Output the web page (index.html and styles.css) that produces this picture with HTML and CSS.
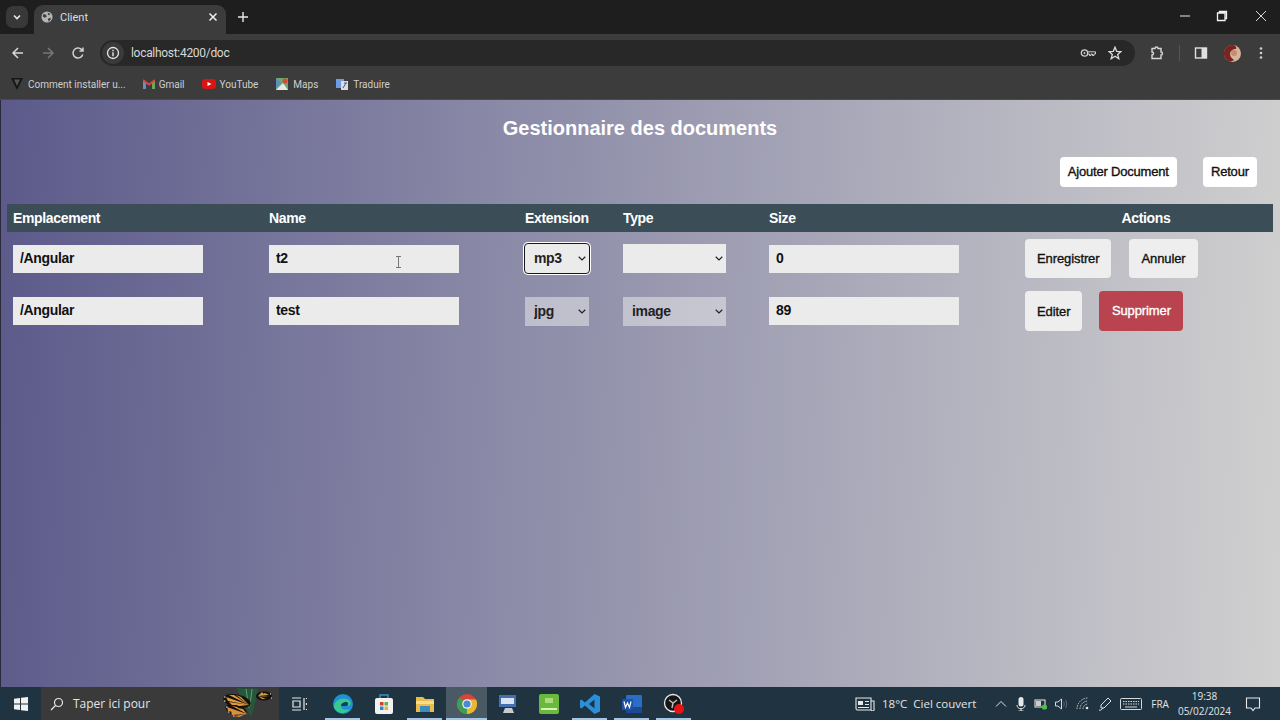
FILE: index.html
```html
<!DOCTYPE html>
<html lang="fr">
<head>
    <meta charset="UTF-8">
    <meta name="viewport" content="width=device-width, initial-scale=1.0">
    <title>Client</title>
    <link rel="stylesheet" href="styles.css">
</head>
<body>
    <div class="browser">
        <!-- Onglets -->
        <div class="tab-strip">
            <div class="tab-search">
                <svg class="ic-10" viewBox="0 0 10 10"><path d="M2 3.500 5 6.500 8 3.500" fill="none" stroke="#e8e8e8" stroke-width="1.600"/></svg>
            </div>
            <div class="tab">
                <svg class="ic-12" viewBox="0 0 14 14"><circle cx="7" cy="7" r="6.500" fill="#b5b5b5"/><path d="M3 3.500 6 4.500 6.500 7 4 8 2 6ZM8 9l3-1 .5 1.500L9 12.500Z M8 2l3 1.500-1.500 1.500L8 4Z" fill="#3c3c3c"/></svg>
                <span class="tab-title">Client</span>
                <svg class="ic-10" viewBox="0 0 10 10"><path d="M1.500 1.500 8.500 8.500M8.500 1.500 1.500 8.500" stroke="#f0f0f0" stroke-width="1.500"/></svg>
            </div>
            <svg class="new-tab ic-12" viewBox="0 0 12 12"><path d="M6 1v10M1 6h10" stroke="#e8e8e8" stroke-width="1.400"/></svg>
            <div class="window-btns">
                <svg class="ic-12 win-min" viewBox="0 0 12 12"><path d="M1 6h10" stroke="#e8e8e8"/></svg>
                <svg class="ic-12" viewBox="0 0 12 12"><path d="M1.500 3h7.500v7.500H1.500ZM3.500 3V1.500h7v7H9" fill="none" stroke="#f4f4f4" stroke-width="1.300"/></svg>
                <svg class="ic-12" viewBox="0 0 12 12"><path d="M1 1l10 10M11 1 1 11" stroke="#d8d8d8"/></svg>
            </div>
        </div>

        <!-- Barre d'adresse -->
        <div class="toolbar">
            <svg class="ic-14" viewBox="0 0 14 14"><path d="M12 7H2.500M7 2 2 7l5 5" fill="none" stroke="#d8d8d8" stroke-width="1.500"/></svg>
            <svg class="ic-14" viewBox="0 0 14 14"><path d="M2 7h9.500M7 2l5 5-5 5" fill="none" stroke="#777" stroke-width="1.500"/></svg>
            <svg class="ic-14" viewBox="0 0 14 14"><path d="M11.800 8.500A5 5 0 1 1 10.500 3.400L12 5M12 1.500V5H8.500" fill="none" stroke="#d0d0d0" stroke-width="1.500"/></svg>
            <div class="omnibox">
                <div class="site-info">
                    <svg class="ic-14" viewBox="0 0 14 14"><circle cx="7" cy="7" r="5.500" fill="none" stroke="#e8e8e8" stroke-width="1.300"/><path d="M7 6.200v4M7 3.800v1.400" stroke="#e8e8e8" stroke-width="1.400"/></svg>
                </div>
                <span class="url">localhost:4200/doc</span>
                <svg class="ic-16" viewBox="0 0 16 16"><circle cx="4.500" cy="8" r="3.200" fill="none" stroke="#d0d0d0" stroke-width="1.300"/><circle cx="4.500" cy="8" r="1" fill="#d0d0d0"/><path d="M7.700 6.800H15.500V9H14V10.500H12.500V9H11V10.500H9.500V9H7.700" fill="none" stroke="#d0d0d0"/></svg>
                <svg class="ic-14" viewBox="0 0 14 14"><path d="M7 1.200 8.700 5.300 13 5.600 9.700 8.400 10.800 12.700 7 10.300 3.200 12.700 4.300 8.400 1 5.600 5.300 5.300Z" fill="none" stroke="#dcdcdc" stroke-width="1.300"/></svg>
            </div>
            <svg class="ic-16 puzzle" viewBox="0 0 16 16"><path d="M3 3.500H6A1.500 1.500 0 0 1 9 3.500H12V7A1.500 1.500 0 0 1 12 10V13.500H3V10A1.500 1.500 0 0 0 3 7Z" fill="none" stroke="#d8d8d8" stroke-width="1.400"/></svg>
            <div class="divider"></div>
            <svg class="ic-14" viewBox="0 0 14 14"><rect x="1.500" y="2" width="11" height="10" fill="none" stroke="#e0e0e0" stroke-width="1.400"/><rect x="7.500" y="2" width="5" height="10" fill="#e0e0e0"/></svg>
            <svg class="avatar" viewBox="0 0 17 17"><circle cx="8.500" cy="8.500" r="8.500" fill="#d8b49c"/><path d="M8.500 0A8.500 8.500 0 0 0 2 14c2 3 6 3 8 1-2-2-4-3-4-6 0-3 3-5 6-5 1-2-1-4-3.500-4Z" fill="#7a2420"/><circle cx="10" cy="8" r="3" fill="#c48c74"/></svg>
            <svg class="ic-14" viewBox="0 0 14 14"><circle cx="7" cy="2.500" r="1.300" fill="#cfcfcf"/><circle cx="7" cy="7" r="1.300" fill="#cfcfcf"/><circle cx="7" cy="11.500" r="1.300" fill="#cfcfcf"/></svg>
        </div>

        <!-- Favoris -->
        <div class="bookmarks">
            <a class="bookmark">
                <svg class="ic-14" viewBox="0 0 14 14"><path d="M1 1h12L7 13Z" fill="#151515"/><path d="M4 2.500h6L7 9Z" fill="#555"/></svg>
                Comment installer u...
            </a>
            <a class="bookmark">
                <svg class="ic-12" viewBox="0 0 12 10"><path d="M0 1 3 3V10H0Z" fill="#6d8dc4"/><path d="M12 1 9 3V10H12Z" fill="#6aa85f"/><path d="M0 1 6 5.500 12 1" fill="none" stroke="#d8483a" stroke-width="2"/></svg>
                Gmail
            </a>
            <a class="bookmark">
                <svg class="ic-14" viewBox="0 0 14 10"><rect width="14" height="10" rx="3" fill="#d81414"/><path d="M5.500 3 9.500 5 5.500 7Z" fill="#fff"/></svg>
                YouTube
            </a>
            <a class="bookmark">
                <svg class="ic-14" viewBox="0 0 14 14"><rect x="1" y="1" width="12" height="12" fill="#6fa868"/><path d="M1 13 8 6l5 7Z" fill="#e8e8e8"/><path d="M1 1 6 6 1 11Z" fill="#5a8dd0"/><circle cx="10" cy="4" r="2.500" fill="#d8483a"/></svg>
                Maps
            </a>
            <a class="bookmark">
                <svg class="ic-14" viewBox="0 0 14 14"><rect x="1" y="2" width="8" height="9" fill="#6d9ce0"/><rect x="6" y="4" width="7" height="9" fill="#d8dce6"/><path d="M8 11 11 6M9 6h3" stroke="#556" fill="none"/></svg>
                Traduire
            </a>
        </div>
    </div>

    <main class="page">
        <h1>Gestionnaire des documents</h1>

        <div class="top-actions">
            <button class="btn btn-white">Ajouter Document</button>
            <button class="btn btn-white">Retour</button>
        </div>

        <table class="doc-table">
            <thead>
                <tr>
                    <th class="col-path">Emplacement</th>
                    <th class="col-name">Name</th>
                    <th class="col-ext">Extension</th>
                    <th class="col-type">Type</th>
                    <th class="col-size">Size</th>
                    <th class="col-actions">Actions</th>
                </tr>
            </thead>
            <tbody>
                <tr>
                    <td><input class="field" type="text" value="/Angular"></td>
                    <td class="name-cell">
                        <input class="field" type="text" value="t2">
                        <svg class="text-cursor" viewBox="0 0 7 12"><path d="M1 .5h5M1 11.500h5M3.500 .5v11" fill="none" stroke="#777"/></svg>
                    </td>
                    <td>
                        <select class="pick pick-ext pick-focus"><option>mp3</option></select>
                    </td>
                    <td>
                        <select class="pick pick-type"><option></option></select>
                    </td>
                    <td><input class="field" type="text" value="0"></td>
                    <td>
                        <div class="row-actions">
                            <button class="btn btn-grey">Enregistrer</button>
                            <button class="btn btn-grey">Annuler</button>
                        </div>
                    </td>
                </tr>
                <tr>
                    <td><input class="field" type="text" value="/Angular"></td>
                    <td><input class="field" type="text" value="test"></td>
                    <td>
                        <select class="pick pick-ext pick-off" disabled><option>jpg</option></select>
                    </td>
                    <td>
                        <select class="pick pick-type pick-off" disabled><option>image</option></select>
                    </td>
                    <td><input class="field" type="text" value="89"></td>
                    <td>
                        <div class="row-actions">
                            <button class="btn btn-grey">Editer</button>
                            <button class="btn btn-red">Supprimer</button>
                        </div>
                    </td>
                </tr>
            </tbody>
        </table>
    </main>

    <footer class="taskbar">
        <div class="start">
            <svg class="ic-16" viewBox="0 0 16 16"><path d="M1 2.800 7 2V7.500H1ZM8 1.800 15 1V7.500H8ZM1 8.500H7V14L1 13.200ZM8 8.500H15V15L8 14.200Z" fill="#f2f2f2"/></svg>
        </div>
        <div class="task-search">
            <svg class="ic-14" viewBox="0 0 14 14"><circle cx="8.500" cy="5.500" r="4" fill="none" stroke="#e8e8e8" stroke-width="1.200"/><path d="M5.500 8.500 1 13" stroke="#e8e8e8" stroke-width="1.200"/></svg>
            <span class="search-text">Taper ici pour</span>
            <svg class="butterfly" viewBox="0 0 50 32">
                <path d="M14 2C20 3 30 2 35 3 34 12 31 22 28 31L24 24C20 16 16 9 14 2Z" fill="#25573a"/>
                <path d="M23 3 26 22M29 3 27 20" stroke="#5fa070" fill="none"/>
                <ellipse cx="14" cy="15" rx="14" ry="6.500" transform="rotate(12 14 15)" fill="#16100a"/>
                <ellipse cx="13" cy="24" rx="11" ry="5.500" transform="rotate(18 13 24)" fill="#16100a"/>
                <path d="M26 19 3 11 5 15ZM26 19 6 9 11 9ZM26 19 13 9 18 11ZM26 19 6 16 9 19ZM26 19 11 18 16 20Z" fill="#dd9a45"/>
                <path d="M24 28 4 21 5 25ZM24 28 8 25 9 29ZM24 28 11 30 16 31ZM24 28 9 20 14 21ZM24 28 15 22 20 23Z" fill="#d98f3e"/>
                <ellipse cx="41" cy="10" rx="8" ry="4.500" fill="#16100a"/>
                <path d="M35 10 39 6 41 9ZM35 10 42 7 46 9ZM35 10 41 11 46 11ZM35 10 39 13 43 13Z" fill="#d0a050"/>
                <path d="M1 11h1.500M1 15h1.500M3 21h1.500M5 26h1.500M10 30h1.500M47 8h1M48 12h1" stroke="#f6f2e2" stroke-width="1.200"/>
            </svg>
        </div>
        <div class="task-apps">
            <div class="app app-wide">
                <svg class="ic-16" viewBox="0 0 16 16"><path d="M1 2h9M1 14h9M2 5h7v6H2ZM13 2v12M15.500 2v1M15.500 7v2M15.500 13v1" fill="none" stroke="#e8e8e8" stroke-width="1.200"/></svg>
            </div>
            <div class="app app-open">
                <svg class="ic-22" viewBox="0 0 22 22"><circle cx="11" cy="11" r="10" fill="#1f8fd8"/><path d="M2 13C3 6 13 3 18 8c2 3 0 5-3 5H9c0 3 4 5 9 3-3 4-8 5-12 3-3-2-4-4-4-6Z" fill="#38c98f"/><path d="M9 13c0-3 3-4 5-4 2 0 3 2 1 4Z" fill="#153c66"/></svg>
            </div>
            <div class="app">
                <svg class="ic-22" viewBox="0 0 22 22"><rect x="2" y="5" width="18" height="16" rx="2" fill="#f2f2f2"/><path d="M7 5V2h8v3" fill="none" stroke="#3c8ec0" stroke-width="1.500"/><rect x="7" y="9" width="3.500" height="3.500" fill="#d8402c"/><rect x="11.500" y="9" width="3.500" height="3.500" fill="#6ab04a"/><rect x="7" y="13.500" width="3.500" height="3.500" fill="#2f86d0"/><rect x="11.500" y="13.500" width="3.500" height="3.500" fill="#e8b430"/></svg>
            </div>
            <div class="app app-open">
                <svg class="ic-22" viewBox="0 0 22 22"><path d="M2 4h7l2 2h9v13H2Z" fill="#e8bd4e"/><rect x="2" y="8" width="18" height="3" fill="#f6dc8c"/><rect x="6" y="13" width="10" height="6" fill="#3d8cc0"/></svg>
            </div>
            <div class="app app-active">
                <svg class="ic-22" viewBox="0 0 22 22"><circle cx="11" cy="11" r="10" fill="#d8443a"/><path d="M11 11 2.300 16A10 10 0 0 0 11 21Z" fill="#3f9e52"/><path d="M11 11V21A10 10 0 0 0 20 6.500H11Z" fill="#e8b92e"/><path d="M11 11 2.300 16A10 10 0 0 1 3.500 4.500Z" fill="#3f9e52"/><circle cx="11" cy="11" r="4.800" fill="#f2f2f2"/><circle cx="11" cy="11" r="3.600" fill="#4a88d8"/></svg>
            </div>
            <div class="app">
                <svg class="ic-22" viewBox="0 0 22 22"><rect x="2" y="2" width="17" height="12" fill="#4270b0"/><rect x="4" y="5" width="13" height="6" fill="#d8e4f0"/><path d="M8 15h7l2 5H6Z" fill="#c8ccd0"/></svg>
            </div>
            <div class="app">
                <svg class="ic-22" viewBox="0 0 22 22"><rect x="1" y="1" width="20" height="20" rx="2" fill="#6ab83c"/><rect x="7" y="5" width="8" height="5" fill="#a8dc7c"/><rect x="3" y="15" width="16" height="2" fill="#d8f0c0"/></svg>
            </div>
            <div class="app app-open">
                <svg class="ic-22" viewBox="0 0 22 22"><path d="M15.500 1 21 3.500V18.500L15.500 21 6 12.500 2.500 15.500 1 14.500V7.500L2.500 6.500 6 9.500ZM15.500 6.500 10 11l5.500 4.500Z" fill="#2a8fd6"/></svg>
            </div>
            <div class="app app-open app-gap">
                <svg class="ic-22" viewBox="0 0 22 22"><rect x="5" y="2" width="16" height="18" rx="1" fill="#2b6cc4"/><rect x="5" y="14" width="16" height="6" fill="#1a4a94"/><rect x="1" y="6" width="11" height="11" rx="1" fill="#1d52a8"/><path d="M3 8.500 4.500 14.500 6.500 10 8.500 14.500 10 8.500" fill="none" stroke="#fff" stroke-width="1.200"/></svg>
            </div>
            <div class="app app-open app-gap">
                <svg class="ic-22" viewBox="0 0 22 22"><circle cx="10" cy="10" r="8.500" fill="#151515" stroke="#e8e8e8" stroke-width="1.300"/><path d="M6 7l4 3 4-3M10 10l-1 5" fill="none" stroke="#bbb" stroke-width="1.500"/><circle cx="16" cy="16" r="5" fill="#e81414"/></svg>
            </div>
        </div>
        <div class="tray">
            <div class="weather">
                <svg class="news" viewBox="0 0 20 14"><path d="M1 1h15v12H2.500A1.500 1.500 0 0 1 1 11.500ZM16 4h3v7.500A1.500 1.500 0 0 1 16 13" fill="none" stroke="#e8e8e8" stroke-width="1.100"/><rect x="3" y="4" width="5" height="4" fill="#e8e8e8"/><path d="M10 4.500h4M10 7.500h4M3 10.500h11" stroke="#e8e8e8"/></svg>
                <span>18°C&nbsp; Ciel couvert</span>
            </div>
            <div class="tray-icons">
                <svg class="ic-12 tray-up" viewBox="0 0 12 12"><path d="M1 8.500 6 3.500 11 8.500" fill="none" stroke="#e0e0e0"/></svg>
                <svg class="ic-14 tray-tight" viewBox="0 0 14 14"><rect x="4.500" y="0" width="5" height="9.500" rx="2.500" fill="#e8e8e8"/><path d="M3 8c0 5 8 5 8 0M7 11.500V14M4.500 14h5" fill="none" stroke="#e8e8e8"/></svg>
                <svg class="ic-14 tray-tight" viewBox="0 0 14 14"><rect x="1" y="3" width="10" height="7" fill="none" stroke="#ddd" stroke-width="1.100"/><rect x="2" y="4" width="5" height="5" fill="#ccc"/><circle cx="10.500" cy="10" r="2.600" fill="#4cc24a"/></svg>
                <svg class="ic-14" viewBox="0 0 14 14"><path d="M1.500 5H4L7.500 2V12L4 9H1.500Z" fill="none" stroke="#d8d8d8"/><path d="M9.500 4.500c1 1.500 1 3.500 0 5M11.500 3c1.700 2.500 1.700 5.500 0 8" fill="none" stroke="#667"/></svg>
                <svg class="ic-14" viewBox="0 0 14 14"><path d="M1 12A11 11 0 0 1 12 1M4 12A8 8 0 0 1 12 4M7 12A5 5 0 0 1 12 7" fill="none" stroke="#cfcfcf" stroke-dasharray="1.500 1"/><circle cx="11" cy="11" r="1.300" fill="#e8e8e8"/></svg>
                <svg class="ic-14" viewBox="0 0 14 14"><path d="M10 1l3 3-7 7H3V8Z" fill="none" stroke="#e0e0e0"/><path d="M1 13c2 1 3-1 4-2" fill="none" stroke="#e0e0e0"/></svg>
                <svg class="keyboard" viewBox="0 0 22 12"><rect x=".5" y=".5" width="21" height="11" rx="1" fill="none" stroke="#d8d8d8"/><path d="M3 3.500h16M3 6h16" stroke="#d8d8d8" stroke-dasharray="1.500 1"/><path d="M5 9h12" stroke="#d8d8d8"/></svg>
            </div>
            <span class="lang">FRA</span>
            <div class="clock">
                <span>19:38</span>
                <span>05/02/2024</span>
            </div>
            <svg class="ic-16 notif" viewBox="0 0 16 16"><path d="M1.500 2h13v10H10L8 14.500 6 12H1.500Z" fill="none" stroke="#e8e8e8" stroke-width="1.100"/></svg>
        </div>
    </footer>
</body>
</html>
```

FILE: styles.css
```css
* {
    margin: 0;
    padding: 0;
    box-sizing: border-box;
}

html, body {
    height: 720px;
    overflow: hidden;
}

body {
    display: flex;
    flex-direction: column;
    font-family: "Liberation Sans", Arial, sans-serif;
}

svg {
    display: block;
    flex-shrink: 0;
}

.ic-10 { width: 10px; height: 10px; }
.ic-12 { width: 12px; height: 12px; }
.ic-14 { width: 14px; height: 14px; }
.ic-16 { width: 16px; height: 16px; }
.ic-22 { width: 22px; height: 22px; }

/* navigateur */
.browser {
    flex: none;
    height: 100px;
    background: #3c3c3c;
    font-family: Roboto, sans-serif;
    color: #dedede;
}

.tab-strip {
    height: 34px;
    display: flex;
    align-items: flex-end;
    background: #1e1e1e;
    padding-left: 6px;
}

.tab-search {
    width: 22px;
    height: 22px;
    margin: 0 6px 6px 0;
    border-radius: 7px;
    background: #383838;
    display: flex;
    align-items: center;
    justify-content: center;
}

.tab {
    width: 192px;
    height: 29px;
    padding: 0 8px 5px 7px;
    border-radius: 9px 9px 0 0;
    background: #3c3c3c;
    display: flex;
    align-items: center;
    gap: 7px;
    font-size: 11px;
}

.tab-title {
    flex: 1;
}

.new-tab {
    margin: 0 0 11px 11px;
}

.window-btns {
    margin-left: auto;
    height: 100%;
    display: flex;
    align-items: center;
    gap: 27px;
    padding: 0 13px 2px 0;
}

.win-min {
    margin: 0 -2px 0 2px;
}

.toolbar {
    height: 33px;
    display: flex;
    align-items: center;
    padding: 6px 0 1px 11px;
    gap: 16px;
}

.omnibox {
    flex: none;
    width: 1035px;
    height: 26px;
    margin-left: -1px;
    border-radius: 13px;
    background: #282828;
    display: flex;
    align-items: center;
    padding: 0 13px 0 2px;
    gap: 12px;
}

.site-info {
    width: 22px;
    height: 22px;
    border-radius: 50%;
    background: #3a3a3a;
    display: flex;
    align-items: center;
    justify-content: center;
    margin-right: -5px;
}

.url {
    flex: 1;
    font-size: 12px;
    letter-spacing: -0.3px;
    color: #d8d8d8;
}

.puzzle {
    margin-left: -2px;
}

.divider {
    flex: none;
    width: 1px;
    height: 16px;
    background: #555;
    margin: 0 -2px;
}

.avatar {
    width: 17px;
    height: 17px;
    margin-right: -3px;
}

.bookmarks {
    height: 33px;
    display: flex;
    align-items: center;
    padding: 2px 0 0 10px;
    gap: 17px;
    font-size: 10px;
    color: #cfcfcf;
    border-bottom: 1px solid #4a4a4a;
}

.bookmark {
    display: flex;
    align-items: center;
    gap: 4px;
}

/* page */
.page {
    flex: 1;
    padding: 17px 7px 0;
    background: linear-gradient(92deg, #5c5a8a 0%, #8c8ba8 40%, #d0d0d0 100%);
    box-shadow: inset 1px 0 0 #2a2a3c;
}

h1 {
    font-size: 20px;
    line-height: 23px;
    text-align: center;
    color: #fff;
}

.top-actions {
    display: flex;
    justify-content: flex-end;
    gap: 26px;
    margin-top: 17px;
    padding-right: 16px;
}

.btn {
    border: none;
    border-radius: 4px;
    font-family: "Liberation Sans", Arial, sans-serif;
    font-size: 13px;
    font-weight: normal;
    -webkit-text-stroke: 0.35px currentColor;
    color: #111;
    height: 30px;
}

.btn-white {
    background: #fff;
    padding: 0 8.2px 2px;
    letter-spacing: -0.2px;
}

.btn-grey {
    background: #eeeeef;
    height: 39px;
    padding: 0 12px;
    letter-spacing: -0.1px;
}

.btn-red {
    background: #b9444f;
    color: #fff;
    height: 39px;
    padding: 0 12.5px 2px;
    letter-spacing: -0.1px;
}

.doc-table {
    width: 1266px;
    margin-top: 17px;
    table-layout: fixed;
    border-collapse: separate;
    border-spacing: 0;
}

.doc-table th {
    height: 28px;
    padding: 0 6px;
    text-align: left;
    font-size: 14px;
    letter-spacing: -0.35px;
    color: #fff;
    background: #3b4d57;
}

.doc-table td {
    height: 52px;
    padding: 0 6px;
    vertical-align: middle;
}

.col-path, .col-name, .col-size { width: 256px; }
.col-ext { width: 98px; }
.col-type { width: 146px; }
.col-actions { width: 254px; text-align: center !important; }

.field {
    display: block;
    width: 190px;
    height: 28px;
    margin-top: 2px;
    padding: 0 7px 2px;
    border: none;
    background: #ebebeb;
    font-family: "Liberation Sans", Arial, sans-serif;
    font-size: 14px;
    font-weight: 600;
    letter-spacing: -0.35px;
    color: #111;
}

.name-cell {
    position: relative;
}

.text-cursor {
    position: absolute;
    left: 132px;
    top: 24px;
    width: 7px;
    height: 12px;
}

.pick {
    display: block;
    height: 29px;
    padding: 0 3px 0 9px;
    border: none;
    border-radius: 0;
    appearance: none;
    background-color: #ebebeb;
    background-image: url("data:image/svg+xml,%3Csvg xmlns='http://www.w3.org/2000/svg' viewBox='0 0 8 5'%3E%3Cpath d='M.7.8 4 4 7.300.8' fill='none' stroke='%23222' stroke-width='1.200'/%3E%3C/svg%3E");
    background-repeat: no-repeat;
    background-size: 8px 5px;
    background-position: right 3px center;
    font-family: "Liberation Sans", Arial, sans-serif;
    font-size: 14px;
    font-weight: 600;
    letter-spacing: -0.35px;
    color: #222;
    opacity: 1;
}

.pick-ext { width: 64px; }
.pick-type { width: 103px; }

.pick-focus {
    outline: 1.5px solid #15171c;
    outline-offset: 0;
    box-shadow: 0 0 0 2px #fff;
    border-radius: 3px;
}

.pick-off {
    margin-top: 3px;
    padding-bottom: 2px;
    background-color: rgba(239, 239, 239, 0.5);
    color: #222;
}

.row-actions {
    display: flex;
    gap: 18px;
}

tr + tr .row-actions {
    gap: 17px;
    padding-top: 2px;
}

tr + tr .btn {
    height: 40px;
}

/* barre des taches */
.taskbar {
    flex: none;
    height: 33px;
    display: flex;
    background: #1f3440;
    font-family: "Open Sans", sans-serif;
    color: #e4e4e4;
}

.start {
    width: 41px;
    display: flex;
    align-items: center;
    justify-content: center;
}

.task-search {
    width: 238px;
    display: flex;
    align-items: center;
    gap: 9px;
    padding-left: 9px;
    background: #3a3a3a;
    font-size: 12px;
}

.search-text {
    flex: 1;
}

.butterfly {
    width: 50px;
    height: 32px;
    margin: -4px 6px 0 0;
}

.task-apps {
    display: flex;
}

.app {
    width: 41px;
    display: flex;
    align-items: center;
    justify-content: center;
}

.app-wide {
    width: 43px;
    padding-right: 3px;
}

.app-open {
    background: linear-gradient(#a4c6e4, #a4c6e4) center bottom / 35px 2px no-repeat;
}

.app-active {
    margin-left: 1px;
    background: linear-gradient(#a4c6e4, #a4c6e4) center bottom / 100% 2px no-repeat, #4a5a64;
}

.app-gap {
    margin-left: 1px;
}

.tray {
    margin-left: auto;
    display: flex;
    align-items: center;
    padding-right: 19px;
    font-size: 11px;
}

.weather {
    display: flex;
    align-items: center;
    gap: 7px;
    margin-right: 19px;
    font-size: 11.5px;
}

.news {
    width: 20px;
    height: 14px;
}

.tray-icons {
    display: flex;
    align-items: center;
    gap: 8px;
}

.tray-up {
    margin-right: -1px;
}

.tray-tight {
    margin-right: -2px;
}

.keyboard {
    width: 22px;
    height: 12px;
}

.lang {
    margin: 0 9px 0 9px;
    font-size: 10px;
}

.clock {
    display: flex;
    flex-direction: column;
    align-items: center;
    font-size: 10px;
    line-height: 15px;
}

.notif {
    margin-left: 14px;
}
```
